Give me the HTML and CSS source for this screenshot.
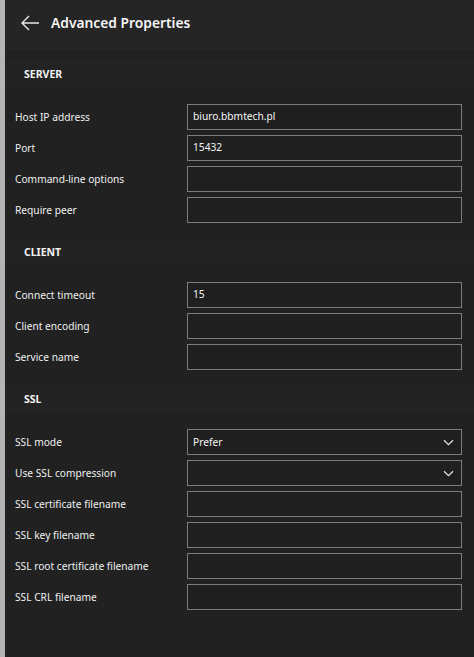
FILE: index.html
```html
<!DOCTYPE html>
<html lang="en">
<head>
    <meta charset="UTF-8">
    <meta name="viewport" content="width=device-width, initial-scale=1.0">
    <title>Advanced Properties</title>
    <link rel="stylesheet" href="styles.css">
</head>
<body>

    <div class="panel">
        <div class="header">
            <svg class="back" width="20" height="16" viewBox="0 0 20 16">
                <path d="M19 8H2M9 1L2 8l7 7" fill="none" stroke="#e8e8e8" stroke-width="1.4"/>
            </svg>
            <span class="title">Advanced Properties</span>
        </div>

        <div class="section">
            <div class="section-head">SERVER</div>
            <div class="row">
                <label>Host IP address</label>
                <div class="field">biuro.bbmtech.pl</div>
            </div>
            <div class="row">
                <label>Port</label>
                <div class="field">15432</div>
            </div>
            <div class="row">
                <label>Command-line options</label>
                <div class="field"></div>
            </div>
            <div class="row">
                <label>Require peer</label>
                <div class="field"></div>
            </div>
        </div>

        <div class="section">
            <div class="section-head">CLIENT</div>
            <div class="row">
                <label>Connect timeout</label>
                <div class="field">15</div>
            </div>
            <div class="row">
                <label>Client encoding</label>
                <div class="field"></div>
            </div>
            <div class="row">
                <label>Service name</label>
                <div class="field"></div>
            </div>
        </div>

        <div class="section">
            <div class="section-head">SSL</div>
            <div class="row">
                <label>SSL mode</label>
                <div class="field select">
                    <span>Prefer</span>
                    <svg width="11" height="7" viewBox="0 0 11 7"><path d="M1 1.2l4.5 4.5 4.5-4.5" fill="none" stroke="#e0e0e0" stroke-width="1.3"/></svg>
                </div>
            </div>
            <div class="row">
                <label>Use SSL compression</label>
                <div class="field select">
                    <span></span>
                    <svg width="11" height="7" viewBox="0 0 11 7"><path d="M1 1.2l4.5 4.5 4.5-4.5" fill="none" stroke="#e0e0e0" stroke-width="1.3"/></svg>
                </div>
            </div>
            <div class="row">
                <label>SSL certificate filename</label>
                <div class="field"></div>
            </div>
            <div class="row">
                <label>SSL key filename</label>
                <div class="field"></div>
            </div>
            <div class="row">
                <label>SSL root certificate filename</label>
                <div class="field"></div>
            </div>
            <div class="row">
                <label>SSL CRL filename</label>
                <div class="field"></div>
            </div>
        </div>
    </div>

</body>
</html>
```

FILE: styles.css
```css
/* Dark settings pane */
body {
    margin: 0;
    background-color: #212121;
    color: #f2f2f2;
    font-family: 'Noto Sans', sans-serif;
    height: 657px;
    overflow: hidden;
}

.panel {
    border-left: 5px solid #b4b4b4;
    height: 657px;
    box-sizing: border-box;
}

.header {
    height: 45px;
    background-color: #252525;
    display: flex;
    align-items: center;
    padding-left: 15px;
    padding-bottom: 5px;
}

.back {
    margin-right: 11px;
}

.title {
    font-size: 13.8px;
    font-weight: 600;
    color: #f5f5f5;
}

.section {
    padding-top: 11px;
}

.section-head {
    height: 26px;
    line-height: 26px;
    padding-left: 19px;
    font-size: 10.5px;
    font-weight: 700;
    background-color: #232323;
    margin-bottom: 17px;
}

.row {
    display: flex;
    align-items: center;
    height: 26px;
    margin-bottom: 5px;
}

.row label {
    width: 172px;
    padding-left: 10px;
    font-size: 10.2px;
    color: #f0f0f0;
}

.field {
    width: 275px;
    height: 26px;
    box-sizing: border-box;
    border: 1.5px solid #7c7c7c;
    background-color: #1f1f1f;
    font-size: 10.2px;
    line-height: 23px;
    padding-left: 5px;
    color: #f5f5f5;
}

.select {
    display: flex;
    justify-content: space-between;
    align-items: center;
    padding-right: 7px;
}
```
